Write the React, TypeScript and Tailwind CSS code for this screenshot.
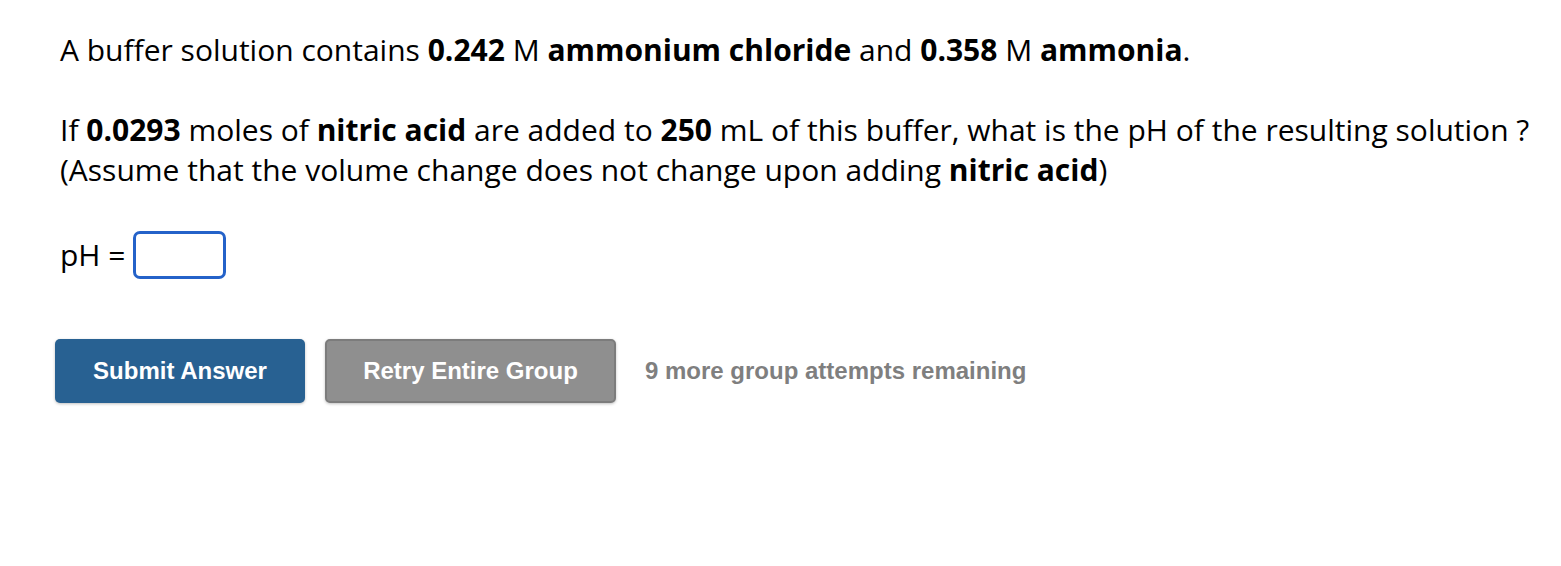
export default function App() {
  return (
    <div className="min-h-[566px] w-full bg-white font-['Open_Sans',sans-serif] text-[30px] leading-[40px] text-black">
      <div className="pl-[60px] pt-[30px]">
        <p>
          A buffer solution contains <b>0.242</b> M <b>ammonium chloride</b> and <b>0.358</b> M <b>ammonia</b>.
        </p>
        <p className="mt-[40px] whitespace-nowrap">
          If <b>0.0293</b> moles of <b>nitric acid</b> are added to <b>250</b> mL of this buffer, what is the pH of
          the resulting solution ?
          <br />
          (Assume that the volume change does not change upon adding <b>nitric acid</b>)
        </p>
        <div className="mt-[41px] flex items-center gap-[8px]">
          <span>pH =</span>
          <input
            type="text"
            className="h-[48px] w-[93px] rounded-[7px] border-[3px] border-[#2462c9] bg-white outline-none"
          />
        </div>
      </div>
      <div className="mt-[60px] flex items-center pl-[55px] font-['Liberation_Sans',Arial,sans-serif] font-bold">
        <button className="h-[64px] w-[250px] rounded-[5px] bg-[#286192] text-[24px] text-white shadow-[0_1px_3px_rgba(0,0,0,0.25)]">
          Submit Answer
        </button>
        <button className="ml-[20px] h-[64px] w-[291px] rounded-[5px] border-2 border-[#7c7c7c] bg-[#8f8f8f] text-[24px] text-white shadow-[0_1px_3px_rgba(0,0,0,0.25)]">
          Retry Entire Group
        </button>
        <span className="ml-[29px] text-[24px] text-[#7f7f7f]">9 more group attempts remaining</span>
      </div>
    </div>
  );
}
